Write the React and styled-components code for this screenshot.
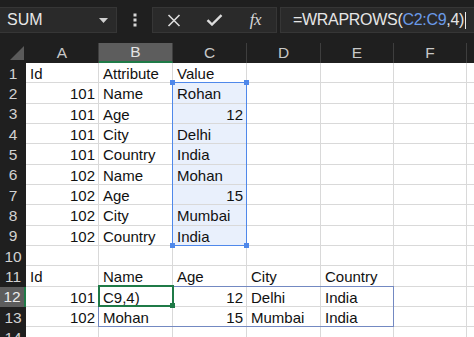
import React from 'react';
import styled, { createGlobalStyle, css } from 'styled-components';

const GlobalStyle = createGlobalStyle`
  html, body {
    margin: 0;
    padding: 0;
    background: #1f1f1f;
  }
`;

const COLS = ['A', 'B', 'C', 'D', 'E', 'F'];

const DATA = [
  ['Id', 'Attribute', 'Value'],
  [101, 'Name', 'Rohan'],
  [101, 'Age', 12],
  [101, 'City', 'Delhi'],
  [101, 'Country', 'India'],
  [102, 'Name', 'Mohan'],
  [102, 'Age', 15],
  [102, 'City', 'Mumbai'],
  [102, 'Country', 'India'],
  [],
  ['Id', 'Name', 'Age', 'City', 'Country'],
  [101, 'C9,4)', 12, 'Delhi', 'India'],
  [102, 'Mohan', 15, 'Mumbai', 'India'],
  [],
];

const ACTIVE_ROW = 12;
const ACTIVE_COL = 1; // B

const Page = styled.div`
  width: 474px;
  height: 337px;
  overflow: hidden;
  background: #1f1f1f;
  font-family: "Liberation Sans", Arial, sans-serif;
`;

const Bar = styled.div`
  display: flex;
  align-items: flex-start;
  height: 43px;
  padding-top: 7px;
  box-sizing: border-box;
`;

const Box = styled.div`
  height: 26px;
  box-sizing: border-box;
  background: #2a2a2a;
  border: 1px solid #363636;
  display: flex;
  align-items: center;
  color: #e6e6e6;
`;

const NameBox = styled(Box)`
  width: 117px;
  border-left: none;
  justify-content: space-between;
  padding: 0 8px 0 7px;
  font-size: 16px;
`;

const Dots = styled.div`
  width: 35px;
  height: 26px;
  display: flex;
  align-items: center;
  justify-content: center;
`;

const Actions = styled(Box)`
  width: 125px;
  margin-right: 3px;
  display: grid;
  grid-template-columns: repeat(3, 41px);
  justify-items: center;
`;

const Fx = styled.span`
  font-family: "Liberation Serif", "Times New Roman", serif;
  font-style: italic;
  font-size: 17px;
  color: #d6d6d6;
  letter-spacing: -0.5px;
`;

const Formula = styled(Box)`
  flex: 1;
  border-right: none;
  padding-left: 12px;
  font-size: 16px;
  letter-spacing: -0.3px;
`;

const RefText = styled.span`
  color: #6a9ae8;
`;

const Caret = styled.span`
  display: inline-block;
  width: 1px;
  height: 17px;
  background: #eaeaea;
  margin-left: 1px;
`;

const Sheet = styled.div`
  position: relative;
  display: grid;
  grid-template-columns: 26px 73px 74px 74px 74px 73px 73px 1fr;
  grid-template-rows: 20px repeat(14, 20.33px);
  font-size: 15px;
`;

const Corner = styled.div`
  background: #1f1f1f;
  display: flex;
  align-items: flex-end;
  justify-content: flex-end;
  padding: 0 2px 3px 0;
`;

const ColHead = styled.div`
  box-sizing: border-box;
  display: flex;
  align-items: center;
  justify-content: center;
  color: #c8c8c8;
  background: #1f1f1f;
  border-right: 1px solid #3e3e3e;
  font-size: 15.5px;
  ${(p) =>
    p.$active &&
    css`
      background: #5d5d5d;
      color: #e4e4e4;
      border-bottom: 2px solid #1f7a47;
    `}
`;

const RowHead = styled.div`
  box-sizing: border-box;
  display: flex;
  align-items: center;
  justify-content: center;
  color: #d2d2d2;
  background: #1f1f1f;
  padding-top: 1px;
  font-size: 15.5px;
  ${(p) =>
    p.$active &&
    css`
      background: #5d5d5d;
      color: #ececec;
      border-right: 2px solid #1f7a47;
    `}
`;

const Cell = styled.div`
  box-sizing: border-box;
  background: ${(p) => (p.$ref ? '#e9f0fc' : '#ffffff')};
  border-right: 1px solid #d9d9d9;
  border-bottom: 1px solid #d9d9d9;
  color: #111111;
  padding: 2px 3px 0 4px;
  display: flex;
  align-items: center;
  justify-content: ${(p) => (p.$num ? 'flex-end' : 'flex-start')};
  white-space: nowrap;
  overflow: hidden;
`;

const Area = styled.div`
  position: absolute;
  pointer-events: none;
  grid-column: ${(p) => p.$cols};
  grid-row: ${(p) => p.$rows};
  top: -1px;
  left: -1px;
  right: 0;
  bottom: 0;
`;

const RefRange = styled(Area)`
  border: 1.5px solid #4f88ea;
`;

const SpillRange = styled(Area)`
  border: 1px solid #7389c2;
`;

const ActiveCell = styled(Area)`
  top: -1.5px;
  left: -1.5px;
  right: -0.5px;
  bottom: -0.5px;
  border: 2px solid #1f7a47;
`;

const Handle = styled.span`
  position: absolute;
  width: 5px;
  height: 5px;
  background: ${(p) => p.$color};
  ${(p) => (p.$top ? 'top: -3px;' : 'bottom: -3px;')}
  ${(p) => (p.$left ? 'left: -3px;' : 'right: -3px;')}
`;

function isRef(r, c) {
  return c === 2 && r >= 2 && r <= 9;
}

export default function App() {
  return (
    <Page>
      <GlobalStyle />
      <Bar>
        <NameBox>
          <span>SUM</span>
          <svg width="9" height="5" viewBox="0 0 9 5">
            <path d="M0 0h9L4.5 5z" fill="#d0d0d0" />
          </svg>
        </NameBox>
        <Dots>
          <svg width="4" height="14" viewBox="0 0 4 14">
            <rect x="0.5" y="0.5" width="3" height="3" fill="#d6d6d6" />
            <rect x="0.5" y="5.5" width="3" height="3" fill="#d6d6d6" />
            <rect x="0.5" y="10.5" width="3" height="3" fill="#d6d6d6" />
          </svg>
        </Dots>
        <Actions>
          <svg width="14" height="13" viewBox="0 0 14 13">
            <path d="M1.5 1L12.5 12M12.5 1L1.5 12" stroke="#dcdcdc" strokeWidth="1.6" fill="none" />
          </svg>
          <svg width="17" height="12" viewBox="0 0 17 12">
            <path d="M1.5 6.2L6 10.5L15.5 1.2" stroke="#dcdcdc" strokeWidth="2.4" fill="none" />
          </svg>
          <Fx>fx</Fx>
        </Actions>
        <Formula>
          <span>=WRAPROWS(</span>
          <RefText>C2:C9</RefText>
          <span>,4)</span>
          <Caret />
        </Formula>
      </Bar>

      <Sheet>
        <Corner>
          <svg width="14" height="14" viewBox="0 0 14 14">
            <path d="M14 0V14H0z" fill="#5a5a5a" />
          </svg>
        </Corner>
        {COLS.map((c, i) => (
          <ColHead key={c} $active={i === ACTIVE_COL}>
            {c}
          </ColHead>
        ))}
        <ColHead />

        {DATA.map((row, ri) => {
          const r = ri + 1;
          return (
            <React.Fragment key={r}>
              <RowHead $active={r === ACTIVE_ROW}>{r}</RowHead>
              {COLS.map((_, ci) => {
                const v = row[ci];
                return (
                  <Cell key={ci} $num={typeof v === 'number'} $ref={isRef(r, ci)}>
                    {v}
                  </Cell>
                );
              })}
              <Cell />
            </React.Fragment>
          );
        })}

        <RefRange $cols="4 / 5" $rows="3 / 11">
          <Handle $color="#4f88ea" $top $left />
          <Handle $color="#4f88ea" $top />
          <Handle $color="#4f88ea" $left />
          <Handle $color="#4f88ea" />
        </RefRange>
        <SpillRange $cols="3 / 7" $rows="13 / 15" />
        <ActiveCell $cols="3 / 4" $rows="13 / 14">
          <Handle $color="#1f7a47" />
        </ActiveCell>
      </Sheet>
    </Page>
  );
}
